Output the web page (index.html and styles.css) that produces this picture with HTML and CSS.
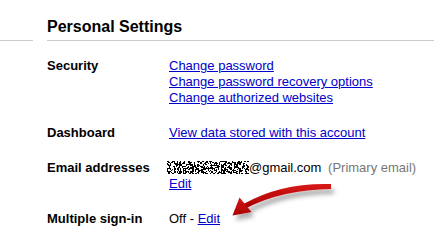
FILE: index.html
```html
<!DOCTYPE html>
<html lang="en">
<head>
    <meta charset="UTF-8">
    <meta name="viewport" content="width=device-width, initial-scale=1.0">
    <title>Personal Settings</title>
    <link rel="stylesheet" href="styles.css">
</head>
<body>

    <div class="page">
        <!-- Section header -->
        <div class="section-head">
            <span class="head-stub"></span>
            <h1>Personal Settings</h1>
        </div>

        <div class="settings">
            <div class="row">
                <div class="label">Security</div>
                <div class="value">
                    <a href="#">Change password</a><br>
                    <a href="#">Change password recovery options</a><br>
                    <a href="#">Change authorized websites</a>
                </div>
            </div>

            <div class="row">
                <div class="label">Dashboard</div>
                <div class="value">
                    <a href="#">View data stored with this account</a>
                </div>
            </div>

            <div class="row">
                <div class="label">Email addresses</div>
                <div class="value">
                    <svg class="blur-name" width="82" height="13" viewBox="0 0 82 13">
                        <filter id="noise" x="0" y="0" width="100%" height="100%">
                            <feTurbulence type="fractalNoise" baseFrequency="0.55" numOctaves="2" seed="7"/>
                            <feColorMatrix type="saturate" values="0"/>
                            <feComponentTransfer>
                                <feFuncR type="discrete" tableValues="0 1"/>
                                <feFuncG type="discrete" tableValues="0 1"/>
                                <feFuncB type="discrete" tableValues="0 1"/>
                                <feFuncA type="table" tableValues="1 1"/>
                            </feComponentTransfer>
                        </filter>
                        <rect width="82" height="13" filter="url(#noise)"/>
                    </svg>@gmail.com <span class="muted">(Primary email)</span><br>
                    <a href="#">Edit</a>
                </div>
            </div>

            <div class="row">
                <div class="label">Multiple sign-in</div>
                <div class="value">Off - <a href="#">Edit</a></div>
            </div>
        </div>

        <!-- Callout arrow drawn over the page -->
        <svg class="callout" width="434" height="246" viewBox="0 0 434 246">
            <defs>
                <filter id="shadow" x="-20%" y="-50%" width="150%" height="200%">
                    <feDropShadow dx="3" dy="5" stdDeviation="2.2" flood-color="#000" flood-opacity="0.3"/>
                </filter>
                <linearGradient id="red" x1="0" y1="0" x2="0" y2="1">
                    <stop offset="0" stop-color="#d81818"/>
                    <stop offset="1" stop-color="#a80000"/>
                </linearGradient>
            </defs>
            <g filter="url(#shadow)">
                <path d="M331 184 Q281 182.5 243.5 204 L246.5 208 Q283 189.5 331 189 Z" fill="url(#red)"/>
                <path d="M232.5 215.5 L239.5 197.5 L251.5 212 Z" fill="url(#red)"/>
            </g>
        </svg>
    </div>

</body>
</html>
```

FILE: styles.css
```css
/* --- Basic Setup --- */
body {
    margin: 0;
    font-family: "Liberation Sans", Arial, Helvetica, sans-serif;
    font-size: 13px;
    color: #000;
    background-color: #fff;
}

.page {
    position: relative;
    width: 434px;
    height: 246px;
    padding-top: 17px;
    box-sizing: border-box;
    overflow: hidden;
}

/* --- Header --- */
.section-head {
    display: flex;
    align-items: flex-end;
    gap: 14px;
}

.head-stub {
    width: 33px;
    border-bottom: 1px solid #cccccc;
}

h1 {
    flex: 1;
    margin: 0;
    padding-bottom: 3px;
    font-size: 16px;
    line-height: 20px;
    font-weight: bold;
    border-bottom: 1px solid #cccccc;
}

/* --- Settings rows --- */
.settings {
    display: flex;
    flex-direction: column;
    gap: 19px;
    margin-top: 17px;
    padding-left: 47px;
}

.row {
    display: flex;
    line-height: 16px;
}

.label {
    width: 122px;
    flex-shrink: 0;
    font-weight: bold;
}

.value a {
    color: #0000cc;
    text-decoration: underline;
}

.blur-name {
    vertical-align: -2px;
    margin-left: -2px;
}

.muted {
    color: #777777;
    margin-left: 3px;
}

/* --- Arrow overlay --- */
.callout {
    position: absolute;
    left: 0;
    top: 0;
    pointer-events: none;
}
```
